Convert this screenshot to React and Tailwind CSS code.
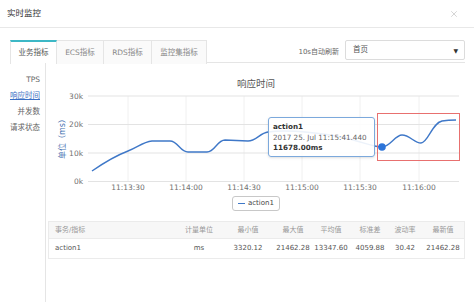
import { X } from 'lucide-react';

const tabs = ['业务指标', 'ECS指标', 'RDS指标', '监控集指标'];
const tabWidths = ['w-[47px]', 'w-[47px]', 'w-[48px]', 'w-[55px]'];
const navItems = ['TPS', '响应时间', '并发数', '请求状态'];

const yTicks = [
    { label: '30k', y: 97 },
    { label: '20k', y: 125.5 },
    { label: '10k', y: 154 },
    { label: '0k', y: 182.5 },
];
const xTicks = [
    { label: '11:13:30', x: 128 },
    { label: '11:14:00', x: 186 },
    { label: '11:14:30', x: 244 },
    { label: '11:15:00', x: 302 },
    { label: '11:15:30', x: 360 },
    { label: '11:16:00', x: 419 },
];

const headers = ['事务/指标', '计量单位', '最小值', '最大值', '平均值', '标准差', '波动率', '最新值'];
const row = ['action1', 'ms', '3320.12', '21462.28', '13347.60', '4059.88', '30.42', '21462.28'];

const linePath =
    'M92,172 C105,163 115,157 128,152 C138,148 143,143 152,142 L170,142 C178,142 180,153 188,153 L207,153 C215,153 217,141 225,141 L248,142 C256,142 260,134 268,133 C290,130 330,135 350,140 C365,144 374,148 382,148 C390,148 395,136 402,136 C410,136 414,144 421,144 C428,144 432,124 442,122 C448,121 452,121 456,121';

const Chart = () => (
    <div className="relative w-[428px] h-[133px]">
        <svg width="428" height="133" viewBox="46 64 428 133" className="block">
            <text x="256" y="88" fontSize="9.5" fill="#555" textAnchor="middle">响应时间</text>
            {xTicks.map((t) => (
                <line key={t.label} x1={t.x} y1="97" x2={t.x} y2="182.5" stroke="#f0f0f0" strokeWidth="1" />
            ))}
            {yTicks.map((t) => (
                <g key={t.label}>
                    <line x1="88" y1={t.y} x2="459" y2={t.y} stroke="#e3e3e3" strokeWidth="1" />
                    <text x="83" y={t.y + 2.5} fontSize="7.5" fill="#707070" textAnchor="end">{t.label}</text>
                </g>
            ))}
            {xTicks.map((t) => (
                <text key={t.label} x={t.x} y="190.5" fontSize="7.5" fill="#707070" textAnchor="middle">{t.label}</text>
            ))}
            <text x="0" y="0" fontSize="8" fill="#3f6fb0" textAnchor="middle" transform="translate(65 138) rotate(-90)">单位（ms）</text>
            <path d={linePath} fill="none" stroke="#3f78c8" strokeWidth="1.4" />
            <circle cx="382" cy="148" r="3.8" fill="#2c74d9" />
            <rect x="377.5" y="114.5" width="82" height="47" fill="none" stroke="#e8706f" strokeWidth="1" />
        </svg>

        {/* Tooltip */}
        <div className="absolute left-[222px] top-[54px] w-[107px] h-[40px] bg-white/90 border border-[#7ca9dc] rounded-[3px] px-[4px] pt-[4px] text-[7.2px] leading-[10.5px] text-[#333] whitespace-nowrap shadow-sm">
            <div className="font-bold">action1</div>
            <div className="text-[#666]">2017 25. Jul 11:15:41.440</div>
            <div className="font-bold">11678.00ms</div>
        </div>
    </div>
);

export default function App() {
    return (
        <div className="w-[474px] h-[302px] bg-white overflow-hidden flex flex-col font-['DejaVu_Sans','Noto_Sans_CJK_SC',sans-serif] text-[#666]">
            {/* Header */}
            <div className="h-[28px] shrink-0 border-b border-[#e8e8e8] flex items-center justify-between pl-[7px] pr-[15px]">
                <span className="text-[8.5px] text-[#333]">实时监控</span>
                <X className="w-[10px] h-[10px] text-[#bbb]" strokeWidth={1.5} />
            </div>

            {/* Tabs */}
            <div className="mt-[12px] ml-[10px] mr-[9px] h-[23px] shrink-0 flex justify-between border-b border-[#e5e5e5]">
                <div className="flex">
                    {tabs.map((t, i) => (
                        <div
                            key={t}
                            className={`${tabWidths[i]} h-[24px] flex items-center justify-center text-[7.5px] ${
                                i === 0
                                    ? 'bg-white border-t-2 border-t-[#3db8c6] border-x border-x-[#e5e5e5] text-[#555]'
                                    : 'bg-[#fafafa] border-t border-r border-[#e5e5e5] text-[#888]'
                            }`}
                        >
                            {t}
                        </div>
                    ))}
                </div>
                <div className="flex items-start gap-[6px]">
                    <span className="mt-[7px] text-[7px] text-[#666]">10s自动刷新</span>
                    <div className="w-[120px] h-[20px] border border-[#dcdcdc] rounded-[2px] flex items-center justify-between pl-[7px] pr-[6px] text-[7.5px] text-[#555]">
                        <span>首页</span>
                        <span className="text-[6px] text-[#333]">▼</span>
                    </div>
                </div>
            </div>

            {/* Body */}
            <div className="flex flex-1">
                <div className="w-[46px] shrink-0 border-r border-[#e5e5e5] pt-[9px] pr-[5px] flex flex-col items-end text-[7.5px] leading-[16px]">
                    {navItems.map((n) => (
                        <span key={n} className={n === '响应时间' ? 'text-[#3a6fc4] underline' : 'text-[#666]'}>
                            {n}
                        </span>
                    ))}
                </div>

                <div className="flex-1 flex flex-col">
                    <Chart />

                    {/* Legend */}
                    <div className="ml-[186px] w-[48px] h-[15px] border border-[#c8c8c8] rounded-[3px] flex items-center justify-center gap-[3px] text-[7px] text-[#444]">
                        <span className="w-[7px] h-[1.5px] bg-[#3f78c8]" />
                        <span>action1</span>
                    </div>

                    {/* Table */}
                    <div className="mt-[10px] ml-[2px] w-[417px] border border-[#ebebeb] text-[7px]">
                        <div className="grid grid-cols-[127px_46px_52px_38px_38px_40px_30px_46px] h-[17px] items-center bg-[#f7f7f7] border-b border-[#ebebeb] text-[#999]">
                            {headers.map((h, i) => (
                                <span key={h} className={i === 0 ? 'pl-[6px]' : 'text-center'}>{h}</span>
                            ))}
                        </div>
                        <div className="grid grid-cols-[127px_46px_52px_38px_38px_40px_30px_46px] h-[19px] items-center text-[#555]">
                            {row.map((v, i) => (
                                <span key={i} className={i === 0 ? 'pl-[6px]' : 'text-center'}>{v}</span>
                            ))}
                        </div>
                    </div>
                </div>
            </div>
        </div>
    );
}
